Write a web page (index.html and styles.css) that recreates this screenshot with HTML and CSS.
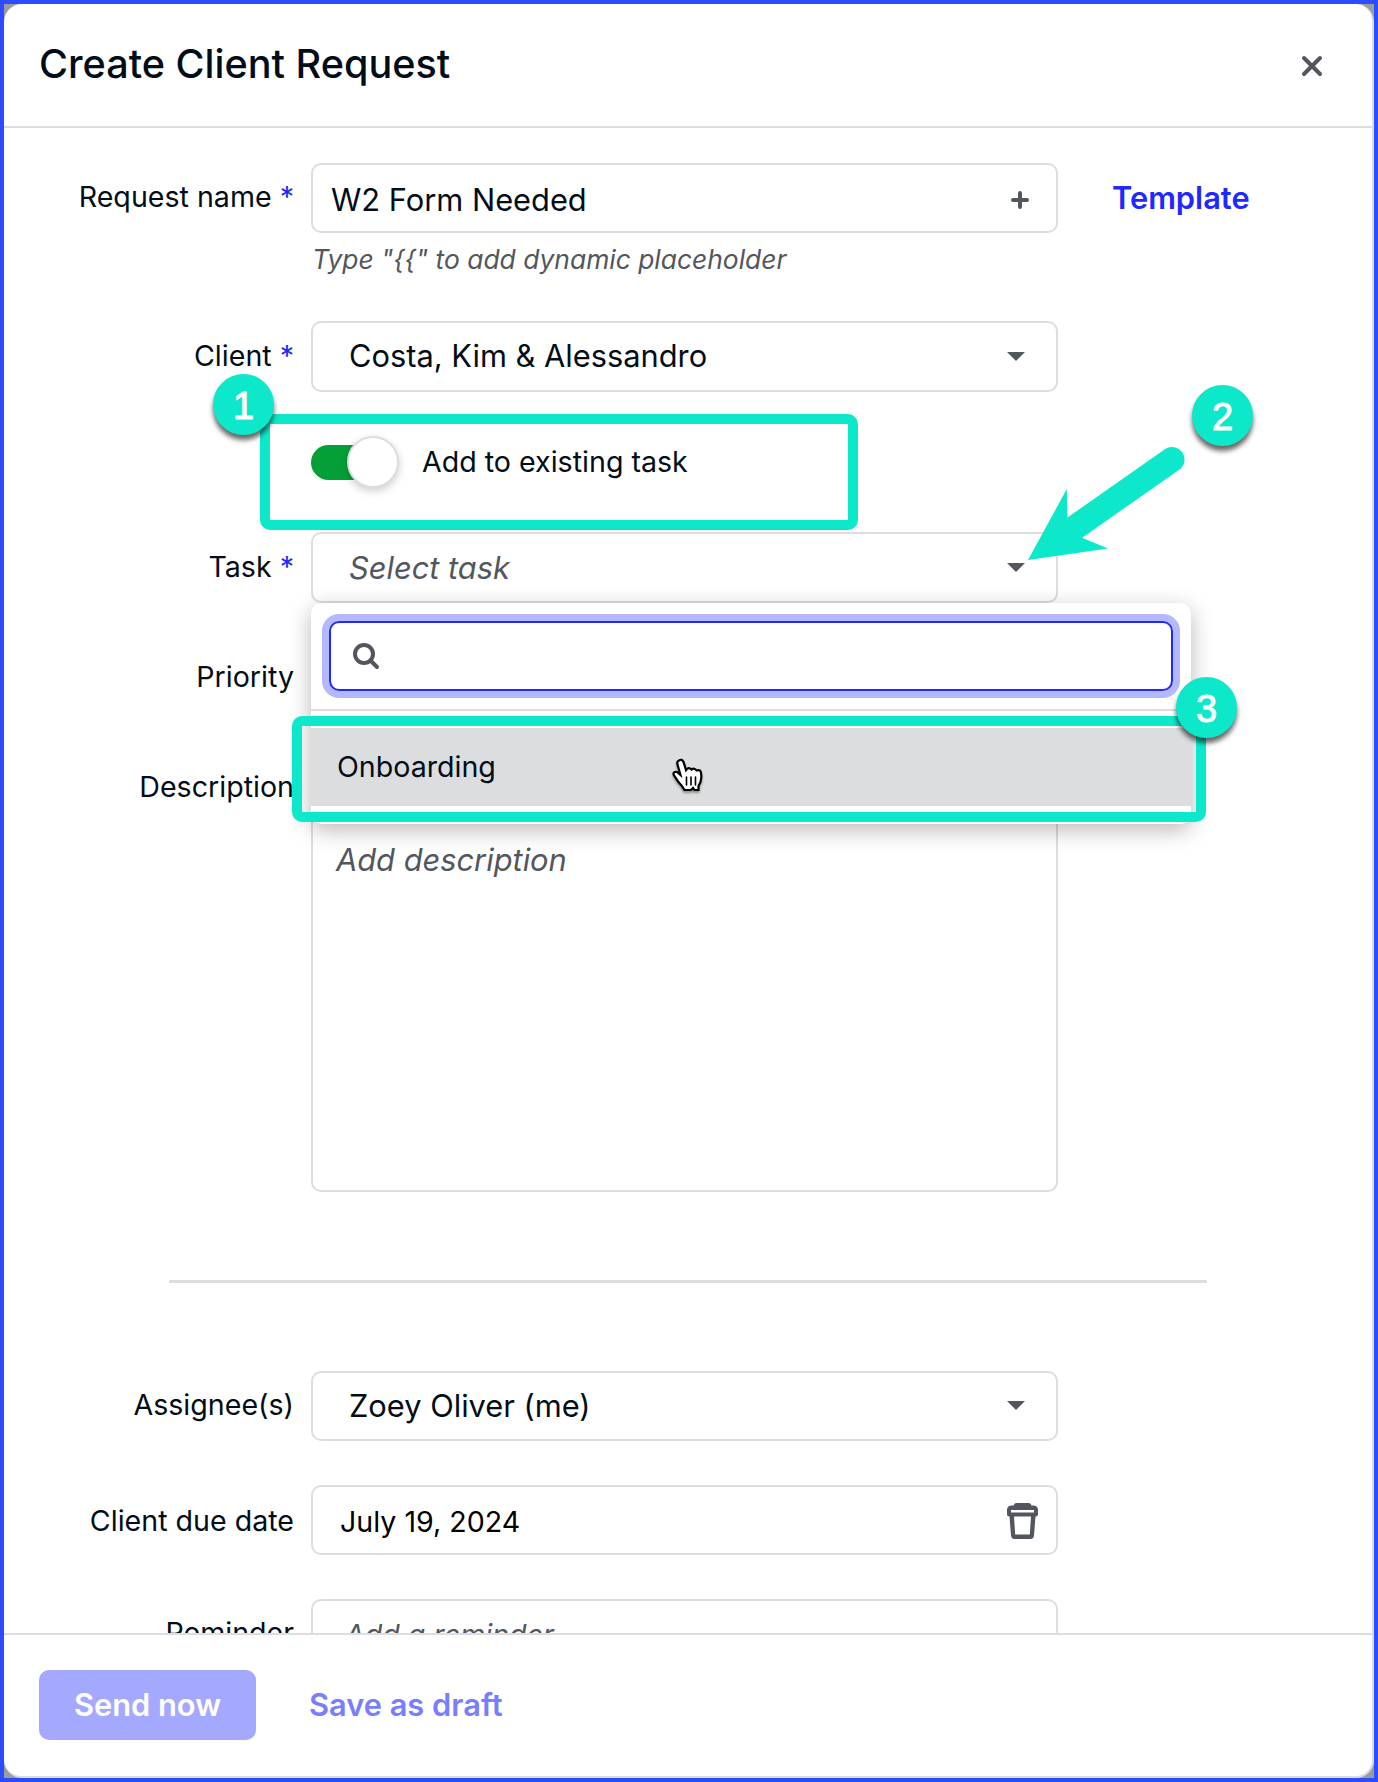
FILE: index.html
```html
<!DOCTYPE html>
<html lang="en">
<head>
	<meta charset="UTF-8">
	<title>Create Client Request</title>
	<link rel="stylesheet" href="styles.css">
</head>
<body>
	<div class="modal">
		<header class="modal-header">
			<h1>Create Client Request</h1>
			<svg class="close" width="24" height="24" viewBox="0 0 24 24"><path d="M4 4 L20 20 M20 4 L4 20"/></svg>
		</header>

		<form class="modal-body">
			<div class="row row-name">
				<label>Request name <span class="req">*</span></label>
				<div class="control">
					<div class="field field-name">
						<span>W2 Form Needed</span>
						<svg class="plus" width="20" height="20" viewBox="0 0 20 20"><path d="M10 3 V17 M3 10 H17"/></svg>
					</div>
					<p class="hint">Type "{{" to add dynamic placeholder</p>
				</div>
				<a class="template">Template</a>
			</div>

			<div class="row row-client">
				<label>Client <span class="req">*</span></label>
				<div class="field select">
					<span>Costa, Kim &amp; Alessandro</span>
					<i class="caret"></i>
				</div>
			</div>

			<div class="row row-toggle">
				<div class="toggle"><div class="knob"></div></div>
				<span class="toggle-text">Add to existing task</span>
			</div>

			<div class="row row-task">
				<label>Task <span class="req">*</span></label>
				<div class="field select">
					<span class="placeholder">Select task</span>
					<i class="caret"></i>
					<div class="dropdown">
						<div class="search">
							<svg width="28" height="28" viewBox="0 0 28 28"><circle cx="12" cy="12" r="9"/><path d="M18.5 18.5 L25 25"/></svg>
						</div>
						<div class="options">
							<div class="option">Onboarding</div>
						</div>
					</div>
				</div>
			</div>

			<div class="row row-priority">
				<label>Priority</label>
				<div class="field select"></div>
			</div>

			<div class="row row-description">
				<label>Description</label>
				<div class="field editor"><span class="placeholder">Add description</span></div>
			</div>

			<hr>

			<div class="row row-assignee">
				<label>Assignee(s)</label>
				<div class="field select">
					<span>Zoey Oliver (me)</span>
					<i class="caret"></i>
				</div>
			</div>

			<div class="row row-date">
				<label>Client due date</label>
				<div class="field date">
					<span>July 19, 2024</span>
					<svg class="trash" width="32" height="38" viewBox="0 0 32 38">
						<path fill-rule="evenodd" d="M9 0 H22 Q24 0 24.500 2.500 H27 Q31 3 31 7 V11 Q31 13.500 28.500 13.500 L27 32.500 Q26.500 36 23.500 36 H7.500 Q4.500 36 4 32.500 L2.500 13.500 Q0 13.500 0 11 V7 Q0 3 4 2.500 H6.500 Q7 0 9 0 Z M4 7 V9.500 H27 V7 Z M7 13.500 L8.200 31.500 H22.800 L24 13.500 Z"/>
					</svg>
				</div>
			</div>

			<div class="row">
				<label>Reminder</label>
				<div class="field select reminder"><span class="placeholder">Add a reminder</span></div>
			</div>
		</form>

		<footer class="modal-footer">
			<button class="send" type="button">Send now</button>
			<button class="draft" type="button">Save as draft</button>
		</footer>
	</div>

	<!-- walkthrough marks -->
	<div class="mark mark-toggle"></div>
	<div class="mark mark-option"></div>
	<svg class="arrow" width="160" height="120" viewBox="0 0 160 120">
		<path class="shaft" d="M55 77.5 L152 9.5"/>
		<path class="head" d="M8 110 L46.800 39 L47.500 67.500 L61.500 87.500 L88 98.500 Z"/>
	</svg>
	<div class="badge badge-1">1</div>
	<div class="badge badge-2">2</div>
	<div class="badge badge-3">3</div>
	<svg class="cursor" width="34" height="38" viewBox="0 0 34 38">
		<path class="hand" d="M8 6.500 Q11 4.500 12.500 8 L15 16 Q17.500 12.500 20.500 15.500 Q23.500 13.500 25.500 16.500 Q29 15 30 18.500 Q31 23 29.500 28 L27.500 32 V36 H23.500 L22 34 L20 36 H13.500 Q11 31.500 7.500 28 Q4 23 2.500 20.500 Q2 17.500 6 18 L9.500 21 L6.500 10.500 Q5.500 7.500 8 6.500 Z"/>
		<path class="fingers" d="M15.500 23 V31 M20 23 V31 M24.500 23 V31"/>
	</svg>
</body>
</html>
```
FILE: styles.css
```css
* {
	box-sizing: border-box;
}
body {
	position: relative;
	margin: 0;
	width: 1378px;
	height: 1782px;
	border: 4px solid #2b4dff;
	background-color: #999ca1;
	font-family: Inter, sans-serif;
	color: #030d17;
	overflow: hidden;
}
.modal {
	display: flex;
	flex-direction: column;
	height: 100%;
	background-color: #fff;
	border-right: 2px solid #ddd;
	border-bottom: 2px solid #ddd;
	border-radius: 18px;
	overflow: hidden;
}
.modal-header {
	display: flex;
	justify-content: space-between;
	align-items: center;
	height: 124px;
	padding: 0 48px 0 35px;
	border-bottom: 2px solid #ddd;
}
h1 {
	margin: 0 0 2px;
	font-size: 39.6px;
	font-weight: 500;
	line-height: 48px;
}
svg {
	fill: none;
	stroke: #53565e;
	stroke-width: 4;
	stroke-linecap: round;
}
.close {
	margin-top: 2px;
}
.modal-body {
	flex: 1;
	min-height: 0;
	padding-top: 35px;
	overflow: hidden;
}
.row {
	display: flex;
	gap: 18px;
	height: 70px;
	margin-bottom: 44px;
}
label {
	width: 290px;
	margin-right: -1px;
	font-size: 28.6px;
	line-height: 68px;
	text-align: right;
}
.req {
	color: #1e28ff;
}
.field {
	display: flex;
	justify-content: space-between;
	align-items: center;
	width: 747px;
	height: 70px;
	border: 2px solid #ddd;
	border-radius: 10px;
	font-size: 30.8px;
}
.select {
	position: relative;
	padding: 0 31px 0 36px;
}
.caret {
	margin-top: -1px;
	border: 9px solid transparent;
	border-top-color: #53565e;
	border-bottom: 0;
}
.placeholder {
	font-style: italic;
	color: #53565e;
}
.row-name {
	height: 158px;
	margin: 0;
}
.field-name {
	padding: 4px 26px 0 18px;
}
.field-name span {
	margin-top: -2px;
}
.hint {
	margin: 8px 0 0 1px;
	font-size: 26.4px;
	font-style: italic;
	line-height: 36px;
	color: #53565e;
}
.template {
	margin-left: 36px;
	font-size: 30.8px;
	font-weight: 600;
	line-height: 70px;
	color: #1e28ff;
}
.row-client, .row-task {
	height: 71px;
	margin: 0;
}
.row-client .field, .row-task .field {
	height: 71px;
}
.row-client label, .row-task label, .row-priority label, .row-description label {
	line-height: 70px;
}
.row-date label {
	line-height: 72px;
}
.row-client .field > span, .row-assignee .field > span {
	margin-top: -2px;
}
.row-toggle {
	align-items: center;
	height: 140px;
	margin: 0;
	padding: 0 0 0 307px;
	gap: 24px;
}
.toggle {
	display: flex;
	align-items: center;
	width: 87px;
	height: 35px;
	border-radius: 18px;
	background: linear-gradient(to right, #04a037 60px, transparent 60px);
}
.knob {
	flex: none;
	width: 52px;
	height: 52px;
	margin-left: 36px;
	border: 2px solid #ddd;
	border-radius: 50%;
	background-color: #fff;
	box-shadow: 0 3px 8px rgba(0,0,0,0.2);
}
.toggle-text {
	margin-top: -1px;
	font-size: 28.6px;
}
.row-task {
	margin-bottom: 39px;
}
.dropdown {
	position: absolute;
	z-index: 1;
	top: 69px;
	left: -2px;
	width: 880px;
	height: 221px;
	border-radius: 10px;
	background-color: #fff;
	box-shadow: 0 6px 22px rgba(0,0,0,0.28);
}
.search {
	display: flex;
	align-items: center;
	height: 70px;
	margin: 18px 18px 18px;
	padding-left: 21px;
	border: 2px solid #1e28ff;
	border-radius: 10px;
	box-shadow: 0 0 0 7px #b4b9ff;
}
.options {
	padding-top: 17px;
	border-top: 2px solid #ddd;
}
.option {
	height: 78px;
	padding-left: 26px;
	background-color: #dcddde;
	font-size: 28.6px;
	line-height: 78px;
}
.row-priority {
	margin-bottom: 40px;
}
.row-description, .editor {
	height: 440px;
}
.row-description {
	margin-bottom: 88px;
}
.editor {
	align-items: flex-start;
	padding: 87px 23px 0;
}
hr {
	width: 1038px;
	height: 3px;
	margin: 0 0 88px 165px;
	border: 0;
	background-color: #ddd;
}
.date {
	padding: 3px 17px 0 27px;
	font-size: 28.6px;
	color: #000;
}
.trash {
	fill: #53565e;
	stroke: none;
}
.reminder {
	padding-left: 32px;
	font-size: 28.6px;
}
.modal-footer {
	display: flex;
	align-items: center;
	height: 143px;
	padding: 0 35px 2px;
	gap: 53px;
	border-top: 2px solid #ddd;
}
button {
	height: 70px;
	padding: 0;
	border: 0;
	border-radius: 10px;
	background: none;
	font-family: inherit;
	font-size: 30.8px;
	font-weight: 600;
}
.send {
	width: 217px;
	background-color: #a5a8ff;
	color: #fff;
}
.draft {
	color: #797eff;
}
.mark {
	position: absolute;
	z-index: 2;
	border: 10px solid #0de8ca;
	border-radius: 10px;
}
.mark-toggle {
	top: 410px;
	left: 256px;
	width: 598px;
	height: 116px;
}
.mark-option {
	top: 712px;
	left: 288px;
	width: 914px;
	height: 106px;
}
.arrow {
	position: absolute;
	z-index: 2;
	top: 446px;
	left: 1016px;
	overflow: visible;
}
.arrow path {
	stroke: none;
}
.arrow .shaft {
	stroke: #0de8ca;
	stroke-width: 25;
}
.arrow .head {
	fill: #0de8ca;
}
.badge {
	position: absolute;
	z-index: 3;
	width: 61px;
	height: 61px;
	border-radius: 50%;
	background-color: #0de8ca;
	box-shadow: 0 5px 5px rgba(0,0,0,0.6);
	font-family: "Liberation Sans", sans-serif;
	font-size: 38px;
	line-height: 64px;
	text-align: center;
	color: #fff;
	-webkit-text-stroke: 1px #fff;
}
.badge-1 {
	top: 370px;
	left: 209px;
}
.badge-2 {
	top: 381px;
	left: 1188px;
}
.badge-3 {
	top: 673px;
	left: 1172px;
}
.cursor {
	position: absolute;
	z-index: 3;
	top: 750px;
	left: 667px;
	overflow: visible;
	filter: drop-shadow(0 2px 1px rgba(0,0,0,0.35));
}
.cursor .hand {
	fill: #fff;
	stroke: #000;
	stroke-width: 2.2;
}
.cursor .fingers {
	stroke: #000;
	stroke-width: 1.6;
}
```
